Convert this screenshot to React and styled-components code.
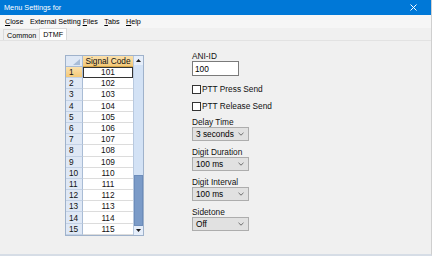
import React from 'react';
import styled, { createGlobalStyle } from 'styled-components';

const GlobalStyle = createGlobalStyle`
  * { box-sizing: border-box; }
  body {
    margin: 0;
    background: #f0f0f0;
  }
`;

const rows = Array.from({ length: 15 }, (_, i) => ({ n: i + 1, code: 101 + i }));

const App = () => {
    return (
        <>
            <GlobalStyle />
            <Window>
                <TitleBar>
                    <TitleText>Menu Settings for</TitleText>
                    <svg width="7" height="7" viewBox="0 0 7 7">
                        <path d="M0.5 0.5 L6.5 6.5 M6.5 0.5 L0.5 6.5" stroke="#fff" strokeWidth="1" />
                    </svg>
                </TitleBar>
                <MenuBar>
                    <MenuItem><Key>C</Key>lose</MenuItem>
                    <MenuItem>External Setting <Key>F</Key>iles</MenuItem>
                    <MenuItem><Key>T</Key>abs</MenuItem>
                    <MenuItem><Key>H</Key>elp</MenuItem>
                </MenuBar>
                <TabStrip>
                    <Tab>Common</Tab>
                    <Tab $active>DTMF</Tab>
                </TabStrip>
                <TabPage>
                    <GridBox>
                        <Grid>
                            <Corner>
                                <svg width="7" height="6" viewBox="0 0 7 6">
                                    <polygon points="7,0 7,6 0,6" fill="#a9bdd8" />
                                </svg>
                            </Corner>
                            <ColHeader>Signal Code</ColHeader>
                            {rows.map((r) => (
                                <React.Fragment key={r.n}>
                                    <RowHeader $selected={r.n === 1}>{r.n}</RowHeader>
                                    <Cell $selected={r.n === 1}>{r.code}</Cell>
                                </React.Fragment>
                            ))}
                        </Grid>
                        <ScrollBar>
                            <ScrollButton>
                                <svg width="5" height="3" viewBox="0 0 5 3">
                                    <polygon points="0,3 5,3 2.5,0" fill="#1a1a1a" />
                                </svg>
                            </ScrollButton>
                            <Track>
                                <Thumb />
                            </Track>
                            <ScrollButton>
                                <svg width="5" height="3" viewBox="0 0 5 3">
                                    <polygon points="0,0 5,0 2.5,3" fill="#1a1a1a" />
                                </svg>
                            </ScrollButton>
                        </ScrollBar>
                    </GridBox>
                    <Panel>
                        <Label>ANI-ID</Label>
                        <TextBox>100</TextBox>
                        <CheckRow $top={8}>
                            <CheckBox />
                            PTT Press Send
                        </CheckRow>
                        <CheckRow $top={7}>
                            <CheckBox />
                            PTT Release Send
                        </CheckRow>
                        <Field>
                            <Label>Delay Time</Label>
                            <Select>3 seconds<Chevron /></Select>
                        </Field>
                        <Field>
                            <Label>Digit Duration</Label>
                            <Select>100 ms<Chevron /></Select>
                        </Field>
                        <Field>
                            <Label>Digit Interval</Label>
                            <Select>100 ms<Chevron /></Select>
                        </Field>
                        <Field>
                            <Label>Sidetone</Label>
                            <Select>Off<Chevron /></Select>
                        </Field>
                    </Panel>
                </TabPage>
            </Window>
        </>
    );
};

const Chevron = () => (
    <ChevronIcon width="6" height="4" viewBox="0 0 6 4">
        <polyline points="0.5,0.8 3,3.2 5.5,0.8" fill="none" stroke="#606060" strokeWidth="0.9" />
    </ChevronIcon>
);

const Window = styled.div`
    width: 432px;
    height: 256px;
    display: flex;
    flex-direction: column;
    background: #f0f0f0;
    font-family: "Liberation Sans", Arial, sans-serif;
    color: #000;
    border-right: 1px solid #cfcfcf;
    border-bottom: 2px solid #d6dde6;
    overflow: hidden;
`;

const TitleBar = styled.div`
    height: 15px;
    flex: none;
    background: #0078d7;
    display: flex;
    align-items: center;
    justify-content: space-between;
    padding: 0 14px 0 4px;
`;

const TitleText = styled.span`
    color: #fff;
    font-size: 7.3px;
`;

const MenuBar = styled.div`
    height: 13px;
    flex: none;
    display: flex;
    align-items: center;
    gap: 6.5px;
    padding-left: 5px;
    background: #f6f6f6;
`;

const MenuItem = styled.span`
    font-size: 7.2px;
    color: #000;
`;

const Key = styled.span`
    text-decoration: underline;
`;

const TabStrip = styled.div`
    height: 12px;
    flex: none;
    display: flex;
    align-items: flex-end;
    padding-left: 3px;
`;

const Tab = styled.div`
    height: ${({ $active }) => ($active ? '12px' : '11px')};
    padding: 0 3px;
    display: flex;
    align-items: center;
    font-size: 7.2px;
    background: ${({ $active }) => ($active ? '#fff' : '#f0f0f0')};
    border: 1px solid #dadada;
    border-bottom: none;
    margin-left: ${({ $active }) => ($active ? '-1px' : '0')};
`;

const TabPage = styled.div`
    flex: 1;
    display: flex;
    align-items: flex-start;
    gap: 47px;
    padding: 10px 0 0 65px;
    border-top: 1px solid #e2e2e2;
`;

const GridBox = styled.div`
    margin-top: 4px;
    display: flex;
    border: 1px solid #9fb2cb;
    background: #fff;
`;

const Grid = styled.div`
    display: grid;
    grid-template-columns: 17px 50px;
    grid-template-rows: 11px;
    grid-auto-rows: 11.2px;
    font-size: 8.3px;
    color: #111;
`;

const Corner = styled.div`
    background: #dfe8f5;
    border-right: 1px solid #a9bcd5;
    border-bottom: 1px solid #a9bcd5;
    display: flex;
    align-items: flex-end;
    justify-content: flex-end;
    padding: 0 2px 1px 0;
`;

const ColHeader = styled.div`
    background: linear-gradient(#fbe1ad, #f4c978);
    border-bottom: 1px solid #d8a849;
    display: flex;
    align-items: center;
    justify-content: center;
`;

const RowHeader = styled.div`
    background: ${({ $selected }) => ($selected ? 'linear-gradient(#fbe1ad, #f4c978)' : '#dfe8f5')};
    border-right: 1px solid #a9bcd5;
    border-bottom: 1px solid #c3d1e4;
    display: flex;
    align-items: center;
    padding-left: 3px;
`;

const Cell = styled.div`
    background: #fff;
    border-bottom: 1px solid #dcdcdc;
    display: flex;
    align-items: center;
    justify-content: center;
    ${({ $selected }) => $selected && 'outline: 1px solid #333; outline-offset: -1px;'}
`;

const ScrollBar = styled.div`
    width: 10px;
    display: flex;
    flex-direction: column;
    background: #d3e2f5;
    border-left: 1px solid #b8c9df;
`;

const ScrollButton = styled.div`
    height: 9px;
    flex: none;
    display: flex;
    align-items: center;
    justify-content: center;
    background: #e6eefa;
`;

const Track = styled.div`
    flex: 1;
    display: flex;
    flex-direction: column;
    justify-content: flex-end;
    background: #d3e2f5;
`;

const Thumb = styled.div`
    height: 51px;
    background: #7b9bc8;
    border: 1px solid #6d8dbb;
`;

const Panel = styled.div`
    width: 80px;
    display: flex;
    flex-direction: column;
    padding-left: 1px;
`;

const Label = styled.div`
    font-size: 8.3px;
    height: 10px;
    line-height: 10px;
    color: #111;
    white-space: nowrap;
`;

const TextBox = styled.div`
    width: 47px;
    height: 15px;
    background: #fff;
    border: 1px solid #7a7a7a;
    font-size: 8.3px;
    display: flex;
    align-items: center;
    padding-left: 2px;
`;

const CheckRow = styled.div`
    margin-top: ${({ $top }) => $top}px;
    height: 10px;
    display: flex;
    align-items: center;
    gap: 1px;
    font-size: 8.3px;
    color: #111;
    white-space: nowrap;
`;

const CheckBox = styled.span`
    flex: none;
    width: 9px;
    height: 9px;
    background: #fff;
    border: 1px solid #333;
`;

const Field = styled.div`
    margin-top: 6px;
    display: flex;
    flex-direction: column;
`;

const Select = styled.div`
    width: 57px;
    height: 14px;
    background: #e1e1e1;
    border: 1px solid #adadad;
    font-size: 8.3px;
    display: flex;
    align-items: center;
    justify-content: space-between;
    padding: 0 4px 0 3px;
`;

const ChevronIcon = styled.svg`
    flex: none;
`;

export default App;
